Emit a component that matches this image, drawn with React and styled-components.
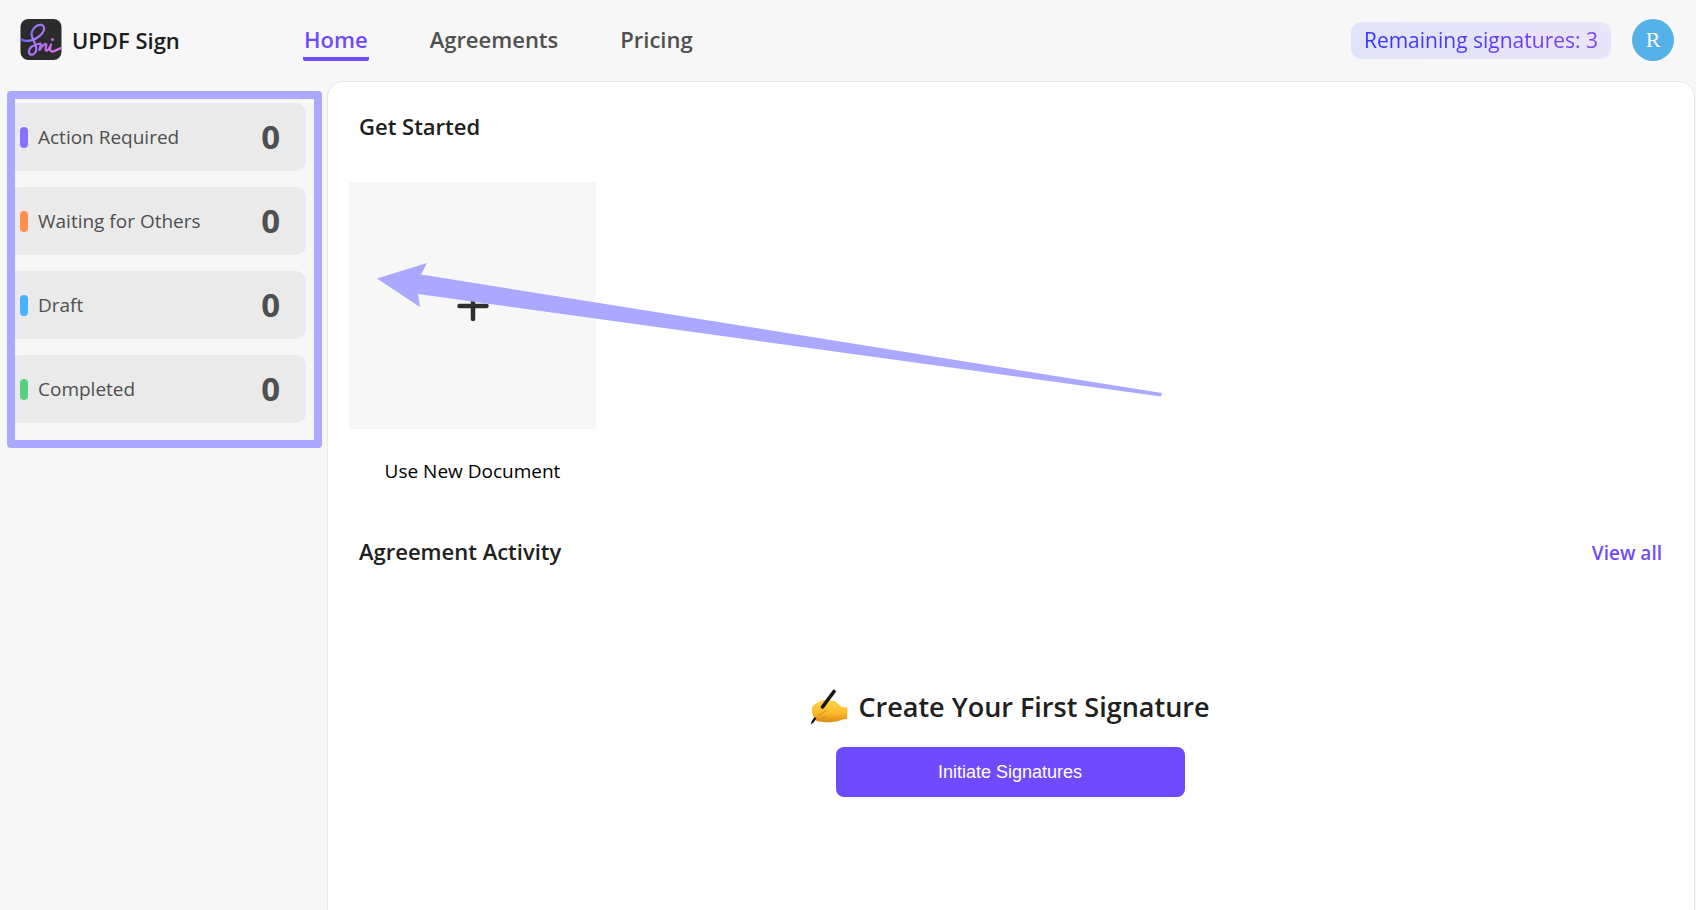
import React, { useState } from "react";
import styled, { createGlobalStyle } from "styled-components";

const tabs = ["Home", "Agreements", "Pricing"];

const statuses = [
  { label: "Action Required", count: 0, color: "#8672ff" },
  { label: "Waiting for Others", count: 0, color: "#ff8f4d" },
  { label: "Draft", count: 0, color: "#47b0ff" },
  { label: "Completed", count: 0, color: "#58cf84" },
];

const Logo = () => (
  <svg width="42" height="42" viewBox="0 0 42 42" aria-hidden="true">
    <defs>
      <linearGradient id="ink" gradientUnits="userSpaceOnUse" x1="0" y1="14" x2="42" y2="30">
        <stop offset="0" stopColor="#4a5cff" />
        <stop offset="0.3" stopColor="#9a78ff" />
        <stop offset="0.65" stopColor="#c46cf0" />
        <stop offset="1" stopColor="#e27be8" />
      </linearGradient>
    </defs>
    <rect x="0.5" y="0" width="41" height="41" rx="8" fill="#2b2b2b" />
    <g fill="none" stroke="url(#ink)" strokeWidth="2.2" strokeLinecap="round" strokeLinejoin="round">
      <path d="M1.500 20.5C5 22.5 11 22.5 16 19.500C21 16.500 24.500 12 24 8.500C23.500 5.500 20 5 16.500 7C12 9.500 10.500 14.500 12.500 19C14.500 23.500 17.500 28 16 32C14.500 36.500 9.500 37 9 33C8.500 28.500 14 25.500 20 24.500C21.500 24.500 20 28 19.500 31C22 27.500 24.500 24.500 26 25C27.500 25.500 24.500 30 26 31.500C27.500 32.500 30 28.500 31 25.500C30 28.500 29 31.500 31.500 32.500C34.500 33 37 30.500 41 29" />
    </g>
    <circle cx="32.500" cy="20.500" r="1.500" fill="#c46cf0" />
  </svg>
);

const WritingHand = () => (
  <svg width="38" height="36" viewBox="0 0 38 36" aria-hidden="true">
    <defs>
      <linearGradient id="skin" x1="0" y1="0" x2="0" y2="1">
        <stop offset="0" stopColor="#ffd54a" />
        <stop offset="0.6" stopColor="#fbb928" />
        <stop offset="1" stopColor="#dd8a16" />
      </linearGradient>
    </defs>
    <path
      fill="url(#skin)"
      d="M3 26C1.500 23 1 18.500 4 16C6.500 14 10 12 13.500 11C16.500 10.500 17.500 12 16.500 13.500L20 11.500C24.500 10.500 28 15 31 17.500C33 18.500 35 18.300 37.500 18.500L37 30C33 29.500 30 32 26 32.500C21 33.500 14 33.500 9 32.500C6 32.500 5 31 5.500 29C4 28.500 3 27.500 3 26Z"
    />
    <path fill="none" stroke="#d98a1b" strokeWidth="1" strokeLinecap="round" d="M8 26C11 25 14 23.500 16 21.500M9 30C12 29.500 14 28.500 16 27" />
    <path stroke="#141414" strokeWidth="3.600" strokeLinecap="round" d="M24 2.500L12.500 18" />
    <path fill="#141414" d="M4.500 28L6.500 29.500L3.500 33.500L1 35.500L1.500 32.500Z" />
  </svg>
);

const App = () => {
  const [activeTab, setActiveTab] = useState("Home");

  return (
    <Page>
      <GlobalStyle />
      <Header>
        <Brand href="#home">
          <Logo />
          UPDF Sign
        </Brand>
        <Nav>
          {tabs.map((tab) => (
            <NavLink
              key={tab}
              href={`#${tab.toLowerCase()}`}
              $active={tab === activeTab}
              onClick={() => setActiveTab(tab)}
            >
              {tab}
            </NavLink>
          ))}
        </Nav>
        <Remaining>
          <span>Remaining signatures: 3</span>
        </Remaining>
        <Avatar type="button" aria-label="Account">
          R
        </Avatar>
      </Header>

      <Body>
        <Sidebar>
          {statuses.map(({ label, count, color }) => (
            <Status key={label} type="button">
              <Marker $color={color} />
              <StatusLabel>{label}</StatusLabel>
              <Count>{count}</Count>
            </Status>
          ))}
          <Frame />
        </Sidebar>

        <Main>
          <Title>Get Started</Title>
          <NewDocument type="button">
            <Tile>
              <svg width="32" height="32" viewBox="0 0 32 32" aria-hidden="true">
                <path stroke="#2f2f2f" strokeWidth="4.500" strokeLinecap="round" d="M2.500 16H29.500M16 2.500V29" />
              </svg>
            </Tile>
            Use New Document
          </NewDocument>

          <SectionHead>
            <Title>Agreement Activity</Title>
            <ViewAll href="#agreements">View all</ViewAll>
          </SectionHead>

          <Empty>
            <EmptyTitle>
              <WritingHand />
              Create Your First Signature
            </EmptyTitle>
            <Primary type="button">Initiate Signatures</Primary>
          </Empty>

          <Arrow width="786" height="134" viewBox="0 0 786 134" aria-hidden="true">
            <path fill="#aaa8ff" d="M0 15.500L50 0L44 11.500L785 130L784 133.500L41 31L43 44Z" />
          </Arrow>
        </Main>
      </Body>
    </Page>
  );
};

const GlobalStyle = createGlobalStyle`
  * {
    box-sizing: border-box;
  }
  body {
    margin: 0;
    background: #f7f7f7;
    color: #202020;
    font-family: "Segoe UI", "Open Sans", sans-serif;
  }
  button {
    border: 0;
    padding: 0;
    font: inherit;
    cursor: pointer;
  }
  a {
    text-decoration: none;
  }
  svg {
    display: block;
    flex-shrink: 0;
  }
`;

const Page = styled.div`
  display: flex;
  flex-direction: column;
  min-height: 100vh;
`;

const Header = styled.header`
  display: flex;
  align-items: center;
  height: 81px;
  padding: 0 22px 1px 20px;
`;

const Brand = styled.a`
  display: flex;
  align-items: center;
  gap: 10px;
  width: 283px;
  color: #1c1c1c;
  font-size: 22px;
  font-weight: 600;
`;

const Nav = styled.nav`
  display: flex;
  flex: 1;
  gap: 60px;
`;

const NavLink = styled.a`
  padding: 0 1px;
  border-bottom: 4px solid ${({ $active }) => ($active ? "#6f4bff" : "transparent")};
  border-radius: 2px;
  margin-top: 2px;
  color: ${({ $active }) => ($active ? "#6f4bff" : "#4f4f4f")};
  font-size: 22px;
  font-weight: 600;
  line-height: 36px;
`;

const Remaining = styled.div`
  margin-right: 21px;
  padding: 0 13px;
  border-radius: 10px;
  background: linear-gradient(90deg, #e1e3fa, #e9e4fa);
  font-size: 21px;
  line-height: 37px;

  span {
    background: linear-gradient(90deg, #3333ff, #7b42f6);
    background-clip: text;
    color: transparent;
  }
`;

const Avatar = styled.button`
  width: 42px;
  height: 42px;
  border-radius: 50%;
  background: #55b1e8;
  color: #fff;
  font-family: "Liberation Serif", serif;
  font-size: 22px;
`;

const Body = styled.div`
  display: grid;
  flex: 1;
  grid-template-columns: 327px minmax(0, 1fr);
  padding-right: 1px;
`;

const Sidebar = styled.aside`
  position: relative;
  display: flex;
  flex-direction: column;
  gap: 16px;
  padding: 22px 21px 0 8px;
`;

const Status = styled.button`
  display: flex;
  align-items: center;
  height: 68px;
  padding: 0 26px 0 12px;
  border-radius: 10px;
  background: #eaeaea;
  color: #4f4f4f;
  text-align: left;
`;

const Marker = styled.span`
  width: 8px;
  height: 21px;
  border-radius: 4px;
  background: ${({ $color }) => $color};
`;

const StatusLabel = styled.span`
  flex: 1;
  margin-left: 10px;
  font-size: 19px;
`;

const Count = styled.span`
  font-size: 33px;
  font-weight: 700;
  line-height: 66px;
`;

const Frame = styled.div`
  position: absolute;
  top: 10px;
  right: 5px;
  left: 7px;
  height: 357px;
  border: 8px solid #aaa8ff;
  border-radius: 4px;
  pointer-events: none;
`;

const Main = styled.main`
  position: relative;
  display: flex;
  flex-direction: column;
  align-items: flex-start;
  padding: 28px 32px 0 21px;
  border: 1px solid #e8e8e8;
  border-bottom: 0;
  border-radius: 16px 16px 0 0;
  background: #fff;
`;

const Title = styled.h2`
  margin: 0;
  padding-left: 10px;
  font-size: 22px;
  font-weight: 600;
  line-height: 32px;
`;

const NewDocument = styled.button`
  display: flex;
  flex-direction: column;
  gap: 28px;
  width: 247px;
  margin-top: 40px;
  background: none;
  color: #000;
  font-size: 19px;
  line-height: 28px;
  text-align: center;
  align-items: stretch;
`;

const Tile = styled.span`
  display: flex;
  align-items: center;
  justify-content: center;
  height: 247px;
  background: #f7f7f7;
`;

const SectionHead = styled.div`
  display: flex;
  align-items: baseline;
  justify-content: space-between;
  align-self: stretch;
  margin-top: 50px;
`;

const ViewAll = styled.a`
  color: #6f4bff;
  font-size: 19px;
  font-weight: 600;
`;

const Empty = styled.section`
  display: flex;
  flex-direction: column;
  align-items: center;
  align-self: stretch;
  gap: 20px;
  padding: 120px 0 40px 9px;
`;

const EmptyTitle = styled.h3`
  display: flex;
  align-items: center;
  gap: 10px;
  margin: 0;
  font-size: 27px;
  font-weight: 600;
  line-height: 40px;
`;

const Primary = styled.button`
  width: 349px;
  height: 50px;
  border-radius: 8px;
  background: #6f4bff;
  color: #fff;
  font-family: "Liberation Sans", Arial, sans-serif;
  font-size: 18px;
`;

const Arrow = styled.svg`
  position: absolute;
  top: 181px;
  left: 49px;
  pointer-events: none;
`;

export default App;
